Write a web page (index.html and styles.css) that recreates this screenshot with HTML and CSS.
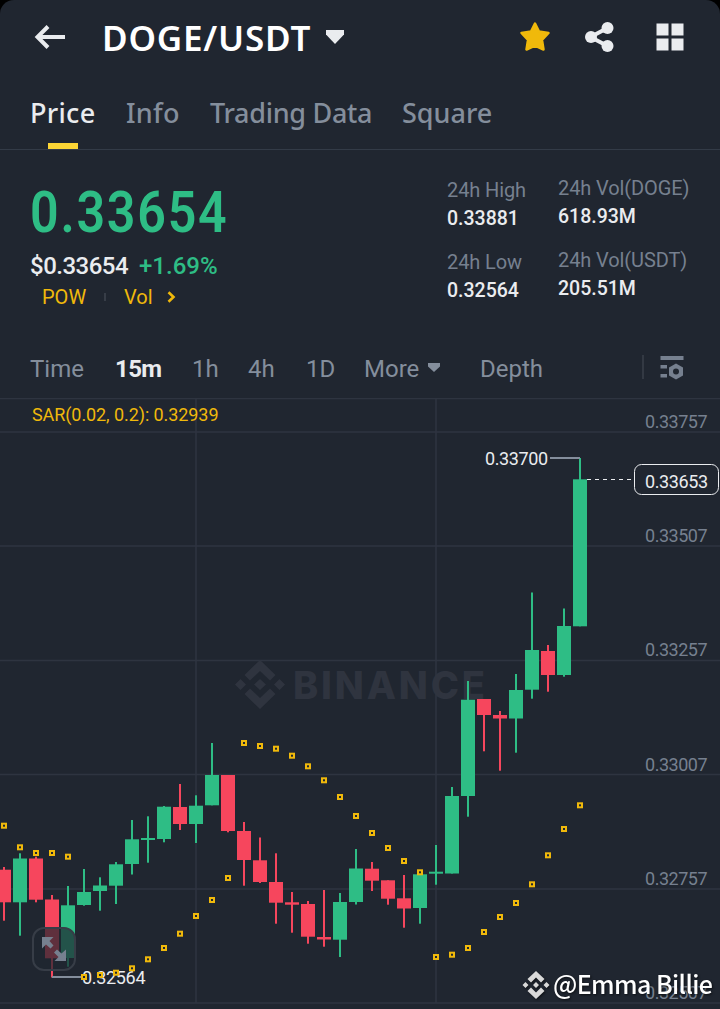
FILE: index.html
```html
<!DOCTYPE html>
<html lang="en">
<head>
  <meta charset="UTF-8">
  <meta name="viewport" content="width=device-width, initial-scale=1.0">
  <title>DOGE/USDT</title>
  <link rel="stylesheet" href="styles.css">
</head>
<body>
  <div class="app">
    <header class="topbar">
      <svg class="back" width="32" height="26" viewBox="0 0 32 26">
        <path d="M31 13H4M14 2.500L3.500 13L14 23.500" fill="none" stroke="#eaecef" stroke-width="4"/>
      </svg>
      <h1>DOGE/USDT</h1>
      <svg class="caret" width="18" height="14" viewBox="0 0 18 14">
        <path d="M0 0H18V4.500L9 14L0 4.500Z" fill="#eaecef"/>
      </svg>
      <div class="actions">
        <svg width="32" height="32" viewBox="0 0 32 32">
          <path d="M16 2.500L20 10.500L29.500 12L23 19L24.500 28.500L16 24.500L7.500 28.500L9 19L2.500 12L12 10.500Z" fill="#f0b90b" stroke="#f0b90b" stroke-width="2.500" stroke-linejoin="round"/>
        </svg>
        <svg width="30" height="30" viewBox="0 0 30 30">
          <path d="M23.500 6L6.500 15L23.500 24" fill="none" stroke="#eaecef" stroke-width="4"/>
          <circle cx="23.500" cy="6" r="6" fill="#eaecef"/>
          <circle cx="7" cy="15" r="6" fill="#eaecef"/>
          <circle cx="23.500" cy="24" r="6" fill="#eaecef"/>
        </svg>
        <svg width="28" height="28" viewBox="0 0 28 28">
          <path d="M.5.5h12v12h-12zM15.500.5h12v12h-12zM.5 15.500h12v12h-12zM15.500 15.500h12v12h-12z" fill="#eaecef"/>
        </svg>
      </div>
    </header>

    <nav class="tabs">
      <a class="tab price active">Price</a>
      <a class="tab info">Info</a>
      <a class="tab trading">Trading Data</a>
      <a class="tab square">Square</a>
    </nav>

    <section class="summary">
      <div class="quote">
        <div class="last">0.33654</div>
        <div class="fiat"><span class="usd">$0.33654</span><span class="change">+1.69%</span></div>
        <div class="tags">
          <span class="pow">POW</span>
          <i class="sep"></i>
          <span class="vol">Vol</span>
          <svg width="9" height="12" viewBox="0 0 9 12"><path d="M1.500 1.200L6.500 6L1.500 10.800" fill="none" stroke="#f0b90b" stroke-width="2.600"/></svg>
        </div>
      </div>
      <dl class="stats first">
        <dt>24h High</dt>
        <dd>0.33881</dd>
        <dt>24h Low</dt>
        <dd>0.32564</dd>
      </dl>
      <dl class="stats second">
        <dt>24h Vol(DOGE)</dt>
        <dd>618.93M</dd>
        <dt>24h Vol(USDT)</dt>
        <dd>205.51M</dd>
      </dl>
    </section>

    <nav class="intervals">
      <a class="time">Time</a>
      <a class="m15 active">15m</a>
      <a class="h1">1h</a>
      <a class="h4">4h</a>
      <a class="d1">1D</a>
      <a class="more">More <svg width="12" height="9" viewBox="0 0 12 9"><path d="M0 0H12V3.500L6 9L0 3.500Z" fill="#848e9c"/></svg></a>
      <a class="depth">Depth</a>
      <i class="divider"></i>
      <svg class="settings" width="24" height="26" viewBox="0 0 24 26">
        <path d="M.5 1h23v4H.5zM.5 10h6.500v3.500H.5zM.5 19h6.500v3.500H.5z" fill="#76808f"/>
        <path d="M16 8.500L23 12.500V20.500L16 24.500L9 20.500V12.500Z" fill="#76808f"/>
        <circle cx="16" cy="16.500" r="3" fill="#202630"/>
      </svg>
    </nav>

    <svg class="chart" width="720" height="611" viewBox="0 398 720 611">
      <path class="grid" d="M0 398.500H720M0 432H720M0 546H720M0 660.500H720M0 774.500H720M0 889H720M0 1003H720M196 398V1003M436 398V1003"/>

      <g class="brand">
        <path d="M260 660L275.500 675L270 680.500L260 671L250 680.500L244.500 675ZM260 709L275.500 694L270 688.500L260 698L250 688.500L244.500 694ZM260 679L266 684.500L260 690L254 684.500ZM240.500 679L246 684.500L240.500 690L235 684.500ZM279.500 679L285 684.500L279.500 690L274 684.500Z"/>
        <text x="293" y="698.500" textLength="192">BINANCE</text>
      </g>

      <g class="axis">
        <text x="645" y="428" textLength="62.500">0.33757</text>
        <text x="645" y="542" textLength="62.500">0.33507</text>
        <text x="645" y="656" textLength="62.500">0.33257</text>
        <text x="645" y="771" textLength="62.500">0.33007</text>
        <text x="645" y="885" textLength="62.500">0.32757</text>
        <text x="645" y="999" textLength="62.500">0.32507</text>
      </g>

      <g id="candles"></g>

      <path d="M550 458H580" stroke="#848e9c" stroke-width="2"/>
      <path d="M52 977H84" stroke="#848e9c" stroke-width="2"/>
      <text class="mark" x="485" y="465" textLength="63">0.33700</text>
      <text class="mark" x="82" y="984" textLength="63.500">0.32564</text>

      <g id="sar"></g>
      <text class="sar-label" x="32" y="421" textLength="186.500">SAR(0.02, 0.2): 0.32939</text>

      <path d="M587 479.500H634" stroke="#eaecef" stroke-dasharray="4 4"/>
      <rect x="634.500" y="464.500" width="84" height="30" rx="7" fill="#202630" stroke="#eaecef"/>
      <text class="mark" x="645" y="488" textLength="63">0.33653</text>

      <rect x="33" y="928" width="42" height="42" rx="11" fill="#202630" fill-opacity=".7" stroke="#373d47" stroke-width="2"/>
      <path d="M42 937H53.500L49.500 941L53.500 945.500L50.500 948.500L46 944.500L42 948.500ZM66 961H54.500L58.500 957L54 952.500L57 949.500L61.500 953.500L66 949.500Z" fill="#76808f"/>

      <g class="author">
        <path d="M536 971L544.500 979L541 982.500L536 977.500L531 982.500L527.500 979ZM536 999L544.500 991L541 987.500L536 992.500L531 987.500L527.500 991ZM536 982L539 985L536 988L533 985ZM525.500 982L528.500 985L525.500 988L522.500 985ZM546.500 982L549.500 985L546.500 988L543.500 985Z"/>
        <text x="553" y="993.500" textLength="160">@Emma Billie</text>
      </g>
    </svg>
  </div>

  <script src="chart.js"></script>
</body>
</html>
```
FILE: styles.css
```css
body {
  margin: 0;
  background: #000;
  font-family: "Noto Sans", sans-serif;
  color: #eaecef;
}

.app {
  width: 720px;
  height: 1009px;
  overflow: hidden;
  background: #202630;
  border-radius: 14px 14px 0 0;
}

.topbar {
  display: flex;
  align-items: center;
  height: 74px;
  padding: 0 36px 0 34px;
}

h1 {
  margin: 2px 0 0 36px;
  width: 210px;
  font-size: 35px;
  line-height: 50px;
  font-weight: 600;
  color: #fff;
  white-space: nowrap;
  letter-spacing: 0.8px;
}

.caret {
  margin-left: 14px;
}

.actions {
  display: flex;
  align-items: center;
  margin-left: auto;
}

.actions svg:nth-child(2) {
  margin: 0 42px 0 33px;
}

.tabs {
  display: flex;
  box-sizing: border-box;
  height: 76px;
  padding-left: 30px;
  border-bottom: 1px solid #333b47;
  font-size: 27px;
  line-height: 77px;
  font-weight: 500;
  color: #848e9c;
}

.tab {
  white-space: nowrap;
}

.price {
  width: 96px;
  letter-spacing: 0.3px;
}

.info {
  width: 84px;
  letter-spacing: 0.3px;
}

.trading {
  width: 192px;
  letter-spacing: -0.3px;
}

.active {
  color: #eaecef;
}

.tab.active::after {
  content: "";
  display: block;
  width: 30px;
  height: 6px;
  margin: -8px 0 0 18px;
  background: #fcd535;
}

.summary {
  display: flex;
  height: 190px;
  font-family: Roboto, sans-serif;
}

.quote {
  flex: none;
  width: 447px;
  padding: 28px 0 0 30px;
  box-sizing: border-box;
}

.last {
  font-size: 57px;
  line-height: 70px;
  font-weight: 600;
  letter-spacing: 2px;
  color: #2ebd85;
  transform: scaleX(0.88);
  transform-origin: left;
}

.fiat {
  font-size: 24px;
  line-height: 36px;
  font-weight: 500;
}

.usd {
  display: inline-block;
  width: 109px;
  letter-spacing: -0.5px;
}

.change {
  color: #2ebd85;
}

.tags {
  display: flex;
  align-items: center;
  padding-left: 12px;
  height: 26px;
  font-size: 20px;
  line-height: 26px;
  color: #f0b90b;
}

.pow {
  width: 62px;
}

.sep {
  width: 2px;
  height: 8px;
  background: #373d47;
}

.vol {
  width: 43px;
  margin-left: 18px;
}

.stats {
  flex: none;
  margin: 0;
  width: 111px;
  white-space: nowrap;
}

.first {
  padding-top: 26px;
}

.second {
  padding-top: 24px;
}

.stats dt {
  font-size: 20px;
  line-height: 28px;
  letter-spacing: -0.1px;
  color: #76808f;
}

.stats dd {
  margin: 0 0 16px;
  padding-top: 1px;
  font-size: 19.5px;
  line-height: 27px;
  font-weight: 500;
}

.intervals {
  display: flex;
  align-items: center;
  height: 58px;
  padding-left: 30px;
  font-family: Roboto, sans-serif;
  font-size: 24px;
  line-height: 58px;
  color: #848e9c;
  white-space: nowrap;
}

.time { width: 85px; }

.m15 {
  width: 77px;
  font-weight: 700;
  letter-spacing: -0.6px;
}

.h1 { width: 56px; }

.h4 { width: 58px; }

.d1 { width: 58px; }

.more {
  display: flex;
  align-items: center;
  justify-content: space-between;
  width: 76px;
  margin-right: 40px;
}

.more svg {
  margin-bottom: 4px;
}

.depth { width: 162px; }

.divider {
  width: 2px;
  height: 24px;
  margin-bottom: 4px;
  background: #333943;
}

.settings {
  margin: 0 0 2px 16px;
}

.chart {
  display: block;
  font-family: Roboto, sans-serif;
}

.grid {
  fill: none;
  stroke: #2e3440;
  stroke-width: 1.5;
}

.brand {
  fill: #2f343f;
  font-family: Inter, sans-serif;
  font-size: 38px;
  font-weight: 800;
}

.axis {
  fill: #76808f;
  font-size: 18px;
}

.mark {
  fill: #eaecef;
  font-size: 18px;
}

.sar-label {
  fill: #f0b90b;
  font-size: 18px;
}

.up {
  fill: #2ebd85;
}

.down {
  fill: #f6465d;
}

.dot {
  fill: #202630;
  stroke: #f0b90b;
  stroke-width: 2;
}

.author {
  fill: #fff;
  font-family: "Noto Sans CJK SC", sans-serif;
  font-size: 25px;
  font-weight: 500;
  filter: drop-shadow(1px 1px 1px rgba(0, 0, 0, 0.6));
}

.author path {
  fill: #d9d9d9;
}
```
FILE: chart.js
```js
// x step between candles is 16px: [direction, high, bodyTop, bodyBottom, low]
const candles = [
  ['down', 867, 869.7, 902.3, 920.7],
  ['up', 853.3, 858.5, 902.3, 935.7],
  ['down', 856.7, 858.5, 899.7, 902.3],
  ['down', 895, 899.5, 958.3, 977.5],
  ['up', 886, 905.3, 958, 966.7],
  ['up', 869, 892, 905, 905.7],
  ['up', 877.3, 885.5, 891, 910.7],
  ['up', 862, 864.3, 885.7, 904],
  ['up', 820, 839.3, 864, 874.5],
  ['up', 816.3, 838, 840, 862.7],
  ['up', 806, 806.7, 839, 842.3],
  ['down', 784, 807, 824, 830],
  ['up', 795.3, 805.7, 824, 843],
  ['up', 743, 775, 805.3, 805.3],
  ['down', 775, 775, 831, 832.3],
  ['down', 822, 831, 860, 885.7],
  ['down', 837.5, 860.3, 882, 883],
  ['down', 853.3, 882, 902.7, 923.7],
  ['down', 892, 902.3, 904.7, 932.7],
  ['down', 901, 904, 936.7, 943.7],
  ['down', 890, 937, 939.5, 946.7],
  ['up', 893, 902, 939.7, 957],
  ['up', 849, 868.5, 902, 904.5],
  ['down', 862, 868.7, 880.7, 891],
  ['down', 880.3, 880.3, 898.7, 904.7],
  ['down', 875, 898.3, 908.5, 927.7],
  ['up', 874, 874.3, 908, 923.7],
  ['up', 845, 871.7, 873.7, 884.7],
  ['up', 787, 796, 873.5, 873.5],
  ['up', 681, 699.7, 796, 816.7],
  ['down', 699, 699, 715, 751.3],
  ['down', 711, 715, 718.5, 770.7],
  ['up', 674, 690, 718.5, 752.7],
  ['up', 592.5, 650, 689.7, 698.7],
  ['down', 645, 651, 675, 691.7],
  ['up', 608.5, 626, 675, 676.7],
  ['up', 458, 479.3, 626.3, 626.3]
];

const sar = [
  825.7, 847.3, 853, 853, 856.7, 977, 975, 972.7, 968.3, 959.3, 948, 933.7,
  916, 900, 878, 743, 746, 748.7, 755.7, 766.3, 780.3, 797, 816, 833, 848,
  861, 872.3, 957, 954.7, 948, 932, 917, 903, 884.3, 855.3, 829, 805.3
];

document.getElementById('candles').innerHTML = candles.map(([dir, high, top, bottom, low], i) => {
  const x = 4 + i * 16;
  return `
    <rect class="${dir}" x="${x - 1}" y="${high}" width="2" height="${low - high}"/>
    <rect class="${dir}" x="${x - 7}" y="${top}" width="14" height="${bottom - top}"/>
  `;
}).join('');

document.getElementById('sar').innerHTML = sar.map((y, i) =>
  `<rect class="dot" x="${2 + i * 16}" y="${y - 2}" width="4" height="4"/>`
).join('');
```
